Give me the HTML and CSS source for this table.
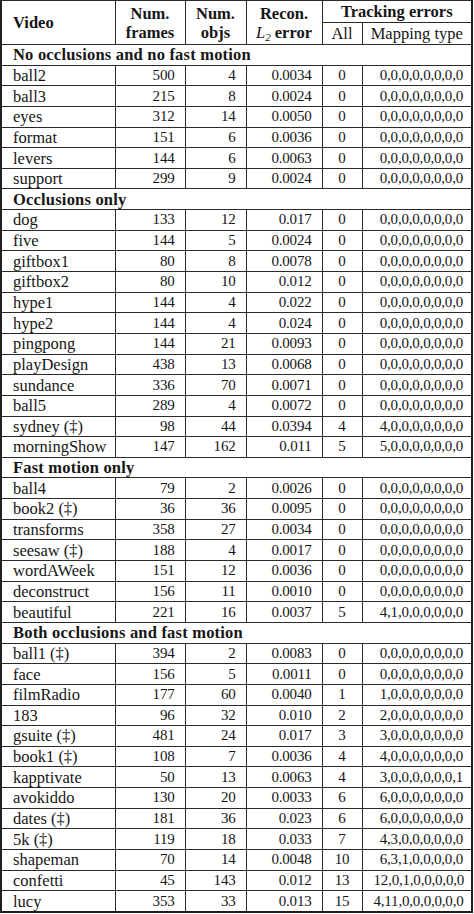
FILE: index.html
```html
<!DOCTYPE html>
<html>
<head>
<meta charset="utf-8">
<link rel="stylesheet" href="styles.css">
</head>
<body>
<table class="results">
  <colgroup>
    <col class="c-video"><col class="c-frames"><col class="c-objs"><col class="c-recon"><col class="c-all"><col class="c-map">
  </colgroup>
  <thead>
    <tr class="h1">
      <th rowspan="2" class="left">Video</th>
      <th rowspan="2">Num.<br>frames</th>
      <th rowspan="2">Num.<br>objs</th>
      <th rowspan="2">Recon.<br><span class="math">L<sub>2</sub></span> error</th>
      <th colspan="2">Tracking errors</th>
    </tr>
    <tr class="h2">
      <th class="plain">All</th>
      <th class="plain">Mapping type</th>
    </tr>
  </thead>
  <tbody>
    <tr class="sec"><td colspan="6">No occlusions and no fast motion</td></tr>
    <tr><td>ball2</td><td>500</td><td>4</td><td>0.0034</td><td>0</td><td>0,0,0,0,0,0,0,0</td></tr>
    <tr><td>ball3</td><td>215</td><td>8</td><td>0.0024</td><td>0</td><td>0,0,0,0,0,0,0,0</td></tr>
    <tr><td>eyes</td><td>312</td><td>14</td><td>0.0050</td><td>0</td><td>0,0,0,0,0,0,0,0</td></tr>
    <tr><td>format</td><td>151</td><td>6</td><td>0.0036</td><td>0</td><td>0,0,0,0,0,0,0,0</td></tr>
    <tr><td>levers</td><td>144</td><td>6</td><td>0.0063</td><td>0</td><td>0,0,0,0,0,0,0,0</td></tr>
    <tr><td>support</td><td>299</td><td>9</td><td>0.0024</td><td>0</td><td>0,0,0,0,0,0,0,0</td></tr>
    <tr class="sec"><td colspan="6">Occlusions only</td></tr>
    <tr><td>dog</td><td>133</td><td>12</td><td>0.017</td><td>0</td><td>0,0,0,0,0,0,0,0</td></tr>
    <tr><td>five</td><td>144</td><td>5</td><td>0.0024</td><td>0</td><td>0,0,0,0,0,0,0,0</td></tr>
    <tr><td>giftbox1</td><td>80</td><td>8</td><td>0.0078</td><td>0</td><td>0,0,0,0,0,0,0,0</td></tr>
    <tr><td>giftbox2</td><td>80</td><td>10</td><td>0.012</td><td>0</td><td>0,0,0,0,0,0,0,0</td></tr>
    <tr><td>hype1</td><td>144</td><td>4</td><td>0.022</td><td>0</td><td>0,0,0,0,0,0,0,0</td></tr>
    <tr><td>hype2</td><td>144</td><td>4</td><td>0.024</td><td>0</td><td>0,0,0,0,0,0,0,0</td></tr>
    <tr><td>pingpong</td><td>144</td><td>21</td><td>0.0093</td><td>0</td><td>0,0,0,0,0,0,0,0</td></tr>
    <tr><td>playDesign</td><td>438</td><td>13</td><td>0.0068</td><td>0</td><td>0,0,0,0,0,0,0,0</td></tr>
    <tr><td>sundance</td><td>336</td><td>70</td><td>0.0071</td><td>0</td><td>0,0,0,0,0,0,0,0</td></tr>
    <tr><td>ball5</td><td>289</td><td>4</td><td>0.0072</td><td>0</td><td>0,0,0,0,0,0,0,0</td></tr>
    <tr><td>sydney (‡)</td><td>98</td><td>44</td><td>0.0394</td><td>4</td><td>4,0,0,0,0,0,0,0</td></tr>
    <tr><td>morningShow</td><td>147</td><td>162</td><td>0.011</td><td>5</td><td>5,0,0,0,0,0,0,0</td></tr>
    <tr class="sec"><td colspan="6">Fast motion only</td></tr>
    <tr><td>ball4</td><td>79</td><td>2</td><td>0.0026</td><td>0</td><td>0,0,0,0,0,0,0,0</td></tr>
    <tr><td>book2 (‡)</td><td>36</td><td>36</td><td>0.0095</td><td>0</td><td>0,0,0,0,0,0,0,0</td></tr>
    <tr><td>transforms</td><td>358</td><td>27</td><td>0.0034</td><td>0</td><td>0,0,0,0,0,0,0,0</td></tr>
    <tr><td>seesaw (‡)</td><td>188</td><td>4</td><td>0.0017</td><td>0</td><td>0,0,0,0,0,0,0,0</td></tr>
    <tr><td>wordAWeek</td><td>151</td><td>12</td><td>0.0036</td><td>0</td><td>0,0,0,0,0,0,0,0</td></tr>
    <tr><td>deconstruct</td><td>156</td><td>11</td><td>0.0010</td><td>0</td><td>0,0,0,0,0,0,0,0</td></tr>
    <tr><td>beautiful</td><td>221</td><td>16</td><td>0.0037</td><td>5</td><td>4,1,0,0,0,0,0,0</td></tr>
    <tr class="sec"><td colspan="6">Both occlusions and fast motion</td></tr>
    <tr><td>ball1 (‡)</td><td>394</td><td>2</td><td>0.0083</td><td>0</td><td>0,0,0,0,0,0,0,0</td></tr>
    <tr><td>face</td><td>156</td><td>5</td><td>0.0011</td><td>0</td><td>0,0,0,0,0,0,0,0</td></tr>
    <tr><td>filmRadio</td><td>177</td><td>60</td><td>0.0040</td><td>1</td><td>1,0,0,0,0,0,0,0</td></tr>
    <tr><td>183</td><td>96</td><td>32</td><td>0.010</td><td>2</td><td>2,0,0,0,0,0,0,0</td></tr>
    <tr><td>gsuite (‡)</td><td>481</td><td>24</td><td>0.017</td><td>3</td><td>3,0,0,0,0,0,0,0</td></tr>
    <tr><td>book1 (‡)</td><td>108</td><td>7</td><td>0.0036</td><td>4</td><td>4,0,0,0,0,0,0,0</td></tr>
    <tr><td>kapptivate</td><td>50</td><td>13</td><td>0.0063</td><td>4</td><td>3,0,0,0,0,0,0,1</td></tr>
    <tr><td>avokiddo</td><td>130</td><td>20</td><td>0.0033</td><td>6</td><td>6,0,0,0,0,0,0,0</td></tr>
    <tr><td>dates (‡)</td><td>181</td><td>36</td><td>0.023</td><td>6</td><td>6,0,0,0,0,0,0,0</td></tr>
    <tr><td>5k (‡)</td><td>119</td><td>18</td><td>0.033</td><td>7</td><td>4,3,0,0,0,0,0,0</td></tr>
    <tr><td>shapeman</td><td>70</td><td>14</td><td>0.0048</td><td>10</td><td>6,3,1,0,0,0,0,0</td></tr>
    <tr><td>confetti</td><td>45</td><td>143</td><td>0.012</td><td>13</td><td>12,0,1,0,0,0,0,0</td></tr>
    <tr><td>lucy</td><td>353</td><td>33</td><td>0.013</td><td>15</td><td>4,11,0,0,0,0,0,0</td></tr>
  </tbody>
</table>
</body>
</html>
```

FILE: styles.css
```css
html, body {
  margin: 0;
  padding: 0;
  background: #ffffff;
}

body {
  font-family: "Liberation Serif", "DejaVu Serif", serif;
  font-size: 16.5px;
  color: #161616;
}

.results {
  border-collapse: collapse;
  table-layout: fixed;
  width: 472px;
  border-left: 2px solid #1e1e1e;
  border-right: 2px solid #1e1e1e;
  border-top: 1px solid #1e1e1e;
  border-bottom: 2px solid #1e1e1e;
}

.c-video { width: 114px; }
.c-frames { width: 70px; }
.c-objs { width: 61px; }
.c-recon { width: 76px; }
.c-all { width: 40px; }
.c-map { width: 110px; }

.results th,
.results td {
  border: 1px solid #2a2a2a;
  padding: 0 9px 0 11px;
  line-height: 19px;
  white-space: nowrap;
  overflow: hidden;
}

.results th {
  font-weight: bold;
  text-align: center;
  line-height: 19px;
  padding: 1px 3px;
}

.results th.left {
  text-align: left;
  padding-left: 11px;
}

.results th.plain {
  font-weight: normal;
}

.h1 th { height: 17px; }
.h2 th { height: 19px; }

.math {
  font-style: italic;
  font-weight: normal;
}

.math sub {
  font-size: 11px;
  vertical-align: -3px;
  line-height: 0;
}

.results td {
  height: 19.65px;
  text-align: right;
  font-size: 15px;
  letter-spacing: -0.2px;
}

.results td:first-child {
  text-align: left;
  font-size: 16.5px;
  letter-spacing: 0;
}

.results td:nth-child(5) {
  text-align: center;
  padding: 0 4px;
}

.results td:nth-child(2),
.results td:nth-child(3),
.results td:nth-child(4) {
  padding-right: 10px;
}

.results td:nth-child(6) {
  padding-right: 8px;
}

.results tr.sec td {
  font-weight: bold;
  text-align: left;
  padding-left: 11px;
  font-size: 16.5px;
  letter-spacing: 0.2px;
}
```
